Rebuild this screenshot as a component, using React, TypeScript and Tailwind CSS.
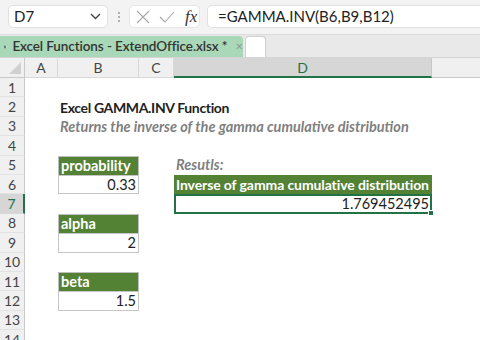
import React from "react";

const font = { fontFamily: "Lato, 'Open Sans', sans-serif" };

const cols = ["A", "B", "C", "D"];
const rows = Array.from({ length: 14 }, (_, i) => i + 1);

const XIcon = () => (
  <svg width="14" height="14" viewBox="0 0 14 14" className="text-[#a8a8a8]">
    <path d="M1 1 L13 13 M13 1 L1 13" stroke="currentColor" strokeWidth="1.1" fill="none" />
  </svg>
);

const CheckIcon = () => (
  <svg width="16" height="12" viewBox="0 0 16 12" className="text-[#a8a8a8]">
    <path d="M1 6 L6 11 L15 1" stroke="currentColor" strokeWidth="1.1" fill="none" />
  </svg>
);

const Chevron = () => (
  <svg width="11" height="7" viewBox="0 0 11 7" className="text-[#444]">
    <path d="M1 1 L5.5 5.5 L10 1" stroke="currentColor" strokeWidth="1.4" fill="none" />
  </svg>
);

const ExcelIcon = () => (
  <svg width="10" height="12" viewBox="0 0 10 12">
    <rect x="3" y="1" width="7" height="10" fill="#fff" stroke="#8a8a8a" strokeWidth="0.8" />
    <path d="M5 3.5h4M5 6h4M5 8.5h4" stroke="#8a8a8a" strokeWidth="0.8" />
    <rect x="0" y="2.5" width="6" height="7" fill="#1d7044" />
    <path d="M1.5 4 L4.5 8 M4.5 4 L1.5 8" stroke="#fff" strokeWidth="0.9" />
  </svg>
);

export default function App() {
  return (
    <div className="w-[480px] h-[340px] overflow-hidden bg-white text-[#222]" style={font}>
      {/* formula bar */}
      <div className="h-[35px] bg-[#f3f3f3] border-b border-[#dcdcdc] flex items-start pt-[5px] pl-[8px]">
        <div className="w-[100px] h-[23px] bg-white border border-[#e1e1e1] rounded-[5px] flex items-center justify-between pl-[5px] pr-[6px]">
          <span className="text-[15px] leading-none">D7</span>
          <Chevron />
        </div>
        <div className="w-[21px] h-[23px] flex flex-col items-center justify-center gap-[2px]">
          <span className="w-[2px] h-[2px] rounded-full bg-[#9a9a9a]" />
          <span className="w-[2px] h-[2px] rounded-full bg-[#9a9a9a]" />
          <span className="w-[2px] h-[2px] rounded-full bg-[#9a9a9a]" />
        </div>
        <div className="w-[71px] h-[23px] bg-white border border-[#e6e6e6] rounded-[5px] flex items-center pl-[6px] gap-[9px]">
          <XIcon />
          <CheckIcon />
          <span className="italic text-[17px] leading-none ml-[1px] text-[#333]" style={{ fontFamily: "'Liberation Serif', serif" }}>
            fx
          </span>
        </div>
        <div className="ml-[7px] flex-1 h-[23px] bg-white border border-[#e1e1e1] rounded-l-[5px] border-r-0 flex items-center pl-[10px]">
          <span className="text-[15px] leading-none">=GAMMA.INV(B6,B9,B12)</span>
        </div>
      </div>

      {/* sheet tabs */}
      <div className="h-[23px] bg-[#e9e9e9] flex items-end border-b border-[#d4d4d4]">
        <div className="w-[243px] h-[21px] bg-[#a8d8b7] rounded-tr-[4px] flex items-center pl-[4px] gap-[5px] whitespace-nowrap overflow-hidden">
          <ExcelIcon />
          <span className="text-[13.5px] font-semibold text-[#333] leading-none tracking-[-0.1px]">Excel Functions - ExtendOffice.xlsx *</span>
          <span className="text-[13px] text-[#8a9a90] leading-none ml-[3px]">×</span>
        </div>
        <div className="w-[21px] h-[21px] ml-[2px] bg-white rounded-t-[4px] border border-b-0 border-[#d0d0d0]" />
      </div>

      {/* grid */}
      <div className="grid grid-cols-[25px_33px_81px_35px_258px_1fr] grid-rows-[20px_repeat(14,19.4px)]">
        <div className="bg-[#f0f0f0] border-r border-b border-[#c8c8c8] relative">
          <div className="absolute right-[3px] bottom-[3px] w-0 h-0 border-l-[12px] border-l-transparent border-b-[12px] border-b-[#d0d0d0]" />
        </div>
        {cols.map((c) => (
          <div
            key={c}
            className={
              c === "D"
                ? "bg-[#d6d6d6] border-b-2 border-[#217346] border-r border-r-[#c8c8c8] flex items-center justify-center text-[14px] text-[#217346]"
                : "bg-[#f0f0f0] border-b border-r border-[#d8d8d8] flex items-center justify-center text-[14px] text-[#444]"
            }
          >
            {c}
          </div>
        ))}
        <div className="bg-[#f0f0f0] border-b border-[#c8c8c8]" />

        {rows.map((r) => (
          <React.Fragment key={r}>
            <div
              className={
                r === 7
                  ? "bg-[#d6d6d6] border-r-2 border-[#217346] border-b border-b-[#d8d8d8] flex items-center justify-center text-[14px] text-[#217346]"
                  : "bg-[#f0f0f0] border-r border-[#c8c8c8] border-b border-b-[#e2e2e2] flex items-center justify-center text-[14px] text-[#444]"
              }
            >
              {r}
            </div>
            <div />
            {r === 2 ? (
              <div className="col-span-4 flex items-center pl-[2px] text-[14px] font-bold whitespace-nowrap tracking-[-0.35px]">Excel GAMMA.INV Function</div>
            ) : r === 3 ? (
              <div className="col-span-4 flex items-center pl-[2px] text-[14.5px] font-bold italic text-[#7f7f7f] whitespace-nowrap">
                Returns the inverse of the gamma cumulative distribution
              </div>
            ) : (
              <>
                <BCell r={r} />
                <div />
                <DCell r={r} />
                <div />
              </>
            )}
          </React.Fragment>
        ))}
      </div>
    </div>
  );
}

const headers: Record<number, string> = { 5: "probability", 8: "alpha", 11: "beta" };
const values: Record<number, string> = { 6: "0.33", 9: "2", 12: "1.5" };

function BCell({ r }: { r: number }) {
  if (headers[r])
    return (
      <div className="bg-[#548235] border border-[#bfbfbf] border-b-0 flex items-center pl-[2px] text-[14.5px] font-bold text-white">
        {headers[r]}
      </div>
    );
  if (values[r])
    return (
      <div className="border border-[#c6c6c6] flex items-center justify-end pr-[2px] text-[14.5px]">{values[r]}</div>
    );
  return <div />;
}

function DCell({ r }: { r: number }) {
  if (r === 5)
    return <div className="flex items-center pl-[2px] text-[14.5px] font-bold italic text-[#7f7f7f]">Resutls:</div>;
  if (r === 6)
    return (
      <div className="bg-[#548235] flex items-center pl-[2px] text-[14px] font-bold text-white whitespace-nowrap tracking-[-0.1px]">
        Inverse of gamma cumulative distribution
      </div>
    );
  if (r === 7)
    return (
      <div className="relative border-2 border-[#217346] flex items-center justify-end pr-[1px] text-[14.5px]">
        1.769452495
        <span className="absolute -right-[4px] -bottom-[4px] w-[6px] h-[6px] bg-[#217346] border border-white" />
      </div>
    );
  return <div />;
}
